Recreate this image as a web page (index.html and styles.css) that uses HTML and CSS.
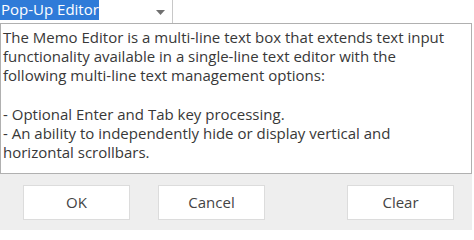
FILE: index.html
```html
<!DOCTYPE html>
<html>
<head>
<meta charset="utf-8">
<link rel="stylesheet" href="styles.css">
</head>
<body>
<div class="app">
  <div class="toprow">
    <div class="combo">
      <span class="combo-text">Pop-Up Editor</span>
      <svg class="arrow" width="9" height="5" viewBox="0 0 9 5"><path d="M0 0H9L4.5 5Z" fill="#707070"/></svg>
    </div>
  </div>
  <div class="memo">
    <div class="line">The Memo Editor is a multi-line text box that extends text input</div>
    <div class="line">functionality available in a single-line text editor with the</div>
    <div class="line">following multi-line text management options:</div>
    <div class="line">&nbsp;</div>
    <div class="line">- Optional Enter and Tab key processing.</div>
    <div class="line">- An ability to independently hide or display vertical and</div>
    <div class="line">horizontal scrollbars.</div>
  </div>
  <div class="panel">
    <div class="btn">OK</div>
    <div class="btn">Cancel</div>
    <div class="spacer"></div>
    <div class="btn">Clear</div>
  </div>
</div>
</body>
</html>
```
FILE: styles.css
```css
html, body {
  margin: 0;
  padding: 0;
  background: #ffffff;
}
.app {
  width: 472px;
  font-family: "Open Sans", "Noto Sans", sans-serif;
  font-size: 15px;
  color: #383838;
}
.toprow {
  height: 23px;
  display: flex;
}
.combo {
  width: 172px;
  height: 23px;
  border-right: 1px solid #c8c8c8;
  display: flex;
  align-items: flex-start;
  position: relative;
}
.combo-text {
  background: #2f7bd8;
  color: #ffffff;
  height: 20px;
  line-height: 19px;
  padding: 0 0 0 1px;
  width: 99px;
  box-sizing: border-box;
  white-space: nowrap;
}
.arrow {
  position: absolute;
  left: 156px;
  top: 10px;
}
.memo {
  border: 1px solid #b0b0b0;
  padding: 4px 0 0 2px;
  box-sizing: border-box;
  height: 151px;
  line-height: 19.2px;
  white-space: nowrap;
  overflow: hidden;
}
.panel {
  height: 56px;
  background: #eeeeee;
  display: flex;
  align-items: center;
  padding: 0 18px 0 23px;
  gap: 28px;
}
.spacer {
  flex: 1;
}
.btn {
  width: 105px;
  height: 33px;
  background: #ffffff;
  border: 1px solid #dcdcdc;
  display: flex;
  align-items: center;
  justify-content: center;
  color: #444444;
  font-size: 15px;
}
```
